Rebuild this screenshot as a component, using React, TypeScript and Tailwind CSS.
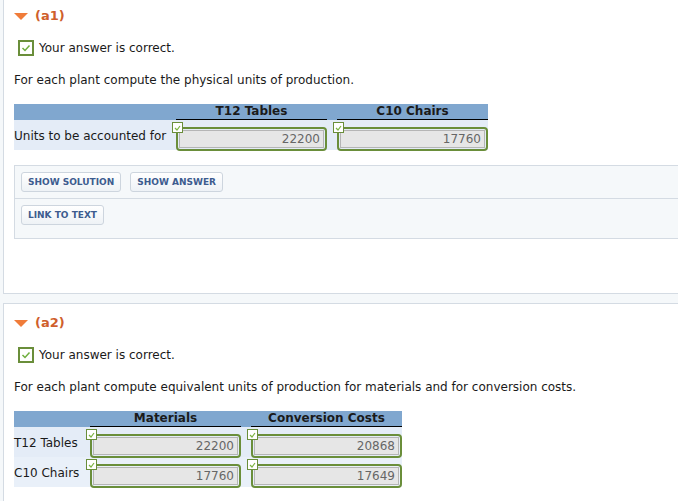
import React from 'react'

const font = { fontFamily: '"DejaVu Sans", Verdana, sans-serif' }

function Triangle() {
  return (
    <svg width="14" height="7" viewBox="0 0 14 7" className="shrink-0">
      <polygon points="0,0 14,0 7,7" fill="#f07c3a" />
    </svg>
  )
}

function SmallCheck() {
  return (
    <div className="absolute -left-[6px] -top-[7px] w-[11px] h-[11px] bg-white border border-[#6a8e3a] flex items-center justify-center">
      <svg width="7" height="6" viewBox="0 0 7 6">
        <polyline points="1,3 3,5 6,1" fill="none" stroke="#7cb342" strokeWidth="1.2" />
      </svg>
    </div>
  )
}

function AnswerInput({ value }: { value: string }) {
  return (
    <div className="relative h-[24px] border-2 border-[#6a8e3a] rounded-[4px] p-[1px] mt-[7px]">
      <SmallCheck />
      <div className="h-full bg-[#e6e6e6] border border-[#b5b5b5] flex items-center justify-end pr-[3px] text-[12px] text-[#666]">
        {value}
      </div>
    </div>
  )
}

function Header({ label }: { label: string }) {
  return (
    <div className="flex items-center gap-[7px] h-[20px]">
      <Triangle />
      <span className="font-bold text-[13px] text-[#cf5f2c]">{label}</span>
    </div>
  )
}

function Correct() {
  return (
    <div className="flex items-center gap-[5px] h-[16px] ml-[4px] mt-[14px]">
      <div className="w-[16px] h-[16px] border-2 border-[#6a8e3a] bg-white flex items-center justify-center">
        <svg width="10" height="8" viewBox="0 0 10 8">
          <polyline points="1.5,4 4,6.5 8.5,1.5" fill="none" stroke="#6fae3d" strokeWidth="1.5" />
        </svg>
      </div>
      <span className="text-[12px] text-[#1a1a1a]">Your answer is correct.</span>
    </div>
  )
}

function Btn({ children }: { children: React.ReactNode }) {
  return (
    <button className="h-[20px] px-[6px] border border-[#cdd5de] rounded-[3px] bg-gradient-to-b from-white to-[#eef2f6] text-[9px] font-bold text-[#3d5c8f] leading-none">
      {children}
    </button>
  )
}

export default function App() {
  return (
    <div style={font} className="w-[678px] h-[501px] overflow-hidden bg-[#f5f8fa] pl-[3px]">
      {/* part a1 */}
      <div className="bg-white border-l border-b border-[#d4dbe3] pl-[10px] pt-[6px] pb-[54px]">
        <Header label="(a1)" />
        <Correct />
        <p className="mt-[15px] h-[18px] leading-[18px] text-[12px] text-[#1a1a1a]">
          For each plant compute the physical units of production.
        </p>
        <div className="mt-[15px] w-[474px] text-[12px] text-[#1a1a1a]">
          <div className="grid grid-cols-[162px_151px_10px_151px] h-[16px] bg-[#80a7cf]">
            <div />
            <div className="border-b border-black text-center font-bold leading-[15px]">T12 Tables</div>
            <div />
            <div className="border-b border-black text-center font-bold leading-[15px]">C10 Chairs</div>
          </div>
          <div className="grid grid-cols-[162px_151px_10px_151px] h-[30px] bg-[#e4ecf7]">
            <div className="flex items-center">Units to be accounted for</div>
            <AnswerInput value="22200" />
            <div />
            <AnswerInput value="17760" />
          </div>
        </div>
        <div className="mt-[15px] border border-r-0 border-[#d4dbe3] bg-[#f5f8fa]">
          <div className="flex gap-[9px] px-[6px] pt-[6px] pb-[6px] border-b border-[#d4dbe3]">
            <Btn>SHOW SOLUTION</Btn>
            <Btn>SHOW ANSWER</Btn>
          </div>
          <div className="flex px-[6px] pt-[6px] pb-[13px]">
            <Btn>LINK TO TEXT</Btn>
          </div>
        </div>
      </div>

      {/* part a2 */}
      <div className="mt-[9px] bg-white border-l border-t border-[#d4dbe3] pl-[10px] pt-[9px] h-[300px]">
        <Header label="(a2)" />
        <Correct />
        <p className="mt-[15px] h-[18px] leading-[18px] text-[12px] text-[#1a1a1a]">
          For each plant compute equivalent units of production for materials and for conversion costs.
        </p>
        <div className="mt-[15px] w-[388px] text-[12px] text-[#1a1a1a]">
          <div className="grid grid-cols-[76px_151px_10px_151px] h-[16px] bg-[#80a7cf]">
            <div />
            <div className="border-b border-black text-center font-bold leading-[15px]">Materials</div>
            <div />
            <div className="border-b border-black text-center font-bold leading-[15px]">Conversion Costs</div>
          </div>
          <div className="grid grid-cols-[76px_151px_10px_151px] h-[30px] bg-[#e4ecf7]">
            <div className="flex items-center">T12 Tables</div>
            <AnswerInput value="22200" />
            <div />
            <AnswerInput value="20868" />
          </div>
          <div className="grid grid-cols-[76px_151px_10px_151px] h-[30px] bg-[#e9f0f9]">
            <div className="flex items-center">C10 Chairs</div>
            <AnswerInput value="17760" />
            <div />
            <AnswerInput value="17649" />
          </div>
        </div>
      </div>
    </div>
  )
}
